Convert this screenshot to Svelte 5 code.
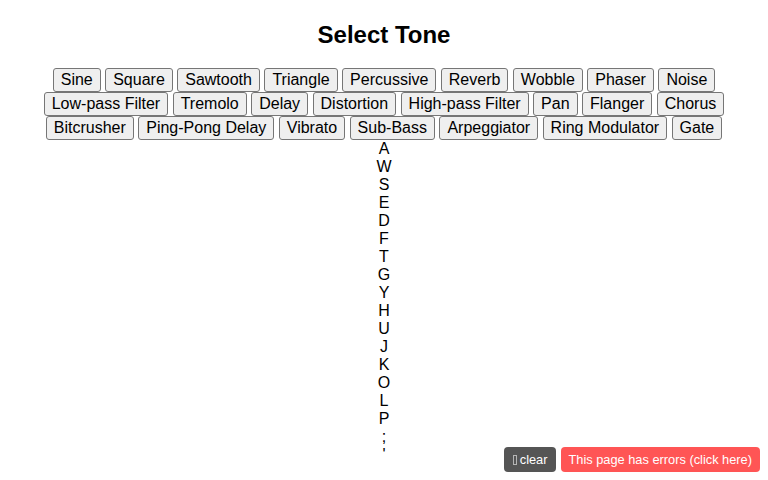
<script>
  const rows = [
    ['Sine', 'Square', 'Sawtooth', 'Triangle', 'Percussive', 'Reverb', 'Wobble', 'Phaser', 'Noise'],
    ['Low-pass Filter', 'Tremolo', 'Delay', 'Distortion', 'High-pass Filter', 'Pan', 'Flanger', 'Chorus'],
    ['Bitcrusher', 'Ping-Pong Delay', 'Vibrato', 'Sub-Bass', 'Arpeggiator', 'Ring Modulator', 'Gate']
  ];
  const keys = ['A', 'W', 'S', 'E', 'D', 'F', 'T', 'G', 'Y', 'H', 'U', 'J', 'K', 'O', 'L', 'P', ';', "'"];
</script>

<main class="page">
  <h1 class="title">Select Tone</h1>
  <div class="tones">
    {#each rows as row}
      <div class="row">
        {#each row as tone}
          <button class="tone" type="button">{tone}</button>{' '}
        {/each}
      </div>
    {/each}
  </div>
  <div class="keys">
    {#each keys as key}
      <div class="key">{key}</div>
    {/each}
  </div>
</main>

<div class="console-bar">
  <button class="clear" type="button"><span class="tofu"></span>clear</button>
  <button class="errors" type="button">This page has errors (click here)</button>
</div>

<style>
  :global(body) {
    margin: 0;
    background: #fff;
    color: #000;
    font-family: "Liberation Sans", Arial, sans-serif;
    font-size: 16px;
  }
  .page {
    text-align: center;
  }
  .title {
    margin: 0;
    padding: 21px 0 19px;
    font-size: 24px;
    font-weight: 700;
    line-height: 28px;
  }
  .row {
    height: 24px;
  }
  .tone {
    box-sizing: border-box;
    height: 24px;
    padding: 1px 7px;
    border: 1px solid #767676;
    border-radius: 3px;
    background: #efefef;
    color: #000;
    font-family: inherit;
    font-size: 16px;
    line-height: 18px;
  }
  .key {
    height: 18px;
    line-height: 18px;
  }
  .console-bar {
    position: fixed;
    right: 8px;
    bottom: 8px;
    display: flex;
    gap: 5px;
  }
  .clear,
  .errors {
    height: 25px;
    padding: 0 8px;
    border: 0;
    border-radius: 4px;
    color: #fff;
    font-family: inherit;
    font-size: 12.8px;
    line-height: 25px;
  }
  .clear {
    background: #555;
  }
  .errors {
    background: #f55;
  }
  .tofu {
    display: inline-block;
    box-sizing: border-box;
    width: 4px;
    height: 10px;
    margin: 0 3px 0 1px;
    border: 1px solid #b5b5b5;
    vertical-align: -1px;
  }
</style>
